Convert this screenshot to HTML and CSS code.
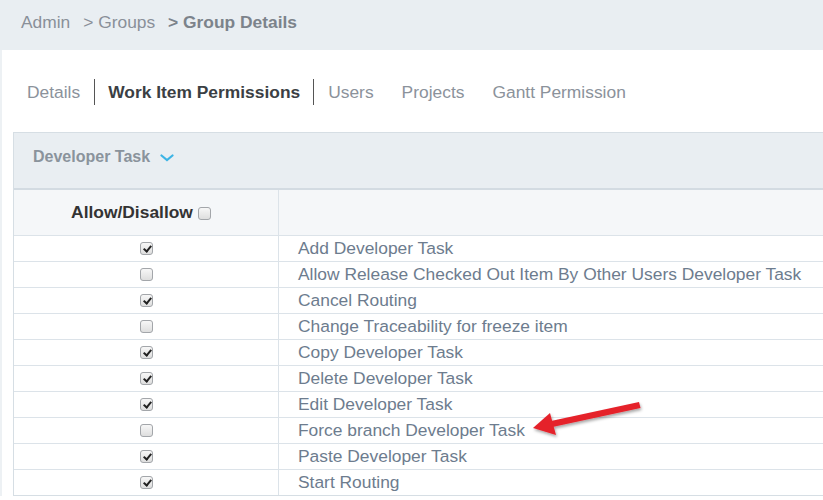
FILE: index.html
```html
<!DOCTYPE html>
<html lang="en">
<head>
    <meta charset="UTF-8">
    <title>Group Details</title>
    <link rel="stylesheet" href="styles.css">
</head>
<body>
<!--面包屑-->
<div class="crumbs">
    <span>Admin</span>
    <span class="sep">&gt;</span>
    <span>Groups</span>
    <b class="sep">&gt;</b>
    <b>Group Details</b>
</div>
<div class="page">
    <!--选项卡-->
    <ul class="tabs">
        <li class="first">Details</li>
        <li class="on">Work Item Permissions</li>
        <li>Users</li>
        <li>Projects</li>
        <li>Gantt Permission</li>
    </ul>
    <!--权限面板-->
    <div class="panel">
        <div class="panel-head">
            Developer Task
            <svg class="chev" width="14" height="8" viewBox="0 0 14 8"><path d="M1.5 1.5 L7 6 L12.5 1.5" fill="none" stroke="#3cb4e5" stroke-width="2.2" stroke-linecap="round"/></svg>
        </div>
        <table class="perm">
            <tr class="head">
                <th class="c1">Allow/Disallow<span class="cb"></span></th>
                <th></th>
            </tr>
            <tr><td class="c1"><span class="cb on"></span></td><td>Add Developer Task</td></tr>
            <tr><td class="c1"><span class="cb"></span></td><td>Allow Release Checked Out Item By Other Users Developer Task</td></tr>
            <tr><td class="c1"><span class="cb on"></span></td><td>Cancel Routing</td></tr>
            <tr><td class="c1"><span class="cb"></span></td><td>Change Traceability for freeze item</td></tr>
            <tr><td class="c1"><span class="cb on"></span></td><td>Copy Developer Task</td></tr>
            <tr><td class="c1"><span class="cb on"></span></td><td>Delete Developer Task</td></tr>
            <tr><td class="c1"><span class="cb on"></span></td><td>Edit Developer Task</td></tr>
            <tr><td class="c1"><span class="cb"></span></td><td>Force branch Developer Task</td></tr>
            <tr><td class="c1"><span class="cb on"></span></td><td>Paste Developer Task</td></tr>
            <tr><td class="c1"><span class="cb on"></span></td><td>Start Routing</td></tr>
        </table>
    </div>
</div>
<!--标注箭头-->
<svg class="arrow" width="823" height="500" viewBox="0 0 823 500">
    <defs>
        <filter id="sh" x="-20%" y="-20%" width="140%" height="140%">
            <feDropShadow dx="1" dy="2" stdDeviation="1.5" flood-color="#000" flood-opacity=".35"/>
        </filter>
    </defs>
    <g filter="url(#sh)" fill="#e5222b">
        <path d="M551 421 L639 402 L640.5 408 L552.5 427 Z"/>
        <path d="M533 428 L550 413 L556 435 Z"/>
    </g>
</svg>
</body>
</html>
```

FILE: styles.css
```css
*{margin:0;padding:0;font-family:"Liberation Sans",Arial,sans-serif;}
li{list-style:none;}
body{background:#fff;}
.crumbs{
    height:50px;
    line-height:44px;
    padding-left:21px;
    background:#e9eef2;
    font-size:17.4px;
    color:#8a9099;
    white-space:nowrap;
}
.crumbs .sep{margin:0 0 0 8px;}
.crumbs b{color:#7c838b;}
.page{
    border-left:2px solid #edf1f4;
    padding-left:11px;
}
.tabs{
    display:flex;
    align-items:center;
    height:82px;
    padding-left:14px;
    padding-top:2px;
    box-sizing:border-box;
}
.tabs li{
    height:26px;
    line-height:26px;
    padding:0 14px;
    font-size:17.4px;
    color:#8b929b;
    white-space:nowrap;
}
.tabs li.first{padding-left:0;}
.tabs li.on{
    padding:0 13px;
    border-left:1px solid #555;
    border-right:1px solid #555;
    font-weight:bold;
    color:#3b3f44;
}
.panel{
    border:1px solid #d6dee4;
    border-right:none;
}
.panel-head{
    display:flex;
    align-items:center;
    height:57px;
    padding-left:19px;
    padding-bottom:8px;
    box-sizing:border-box;
    background:#e9eef2;
    border-bottom:2px solid #d3dbe2;
    font-size:16px;
    font-weight:bold;
    color:#8a939c;
}
.chev{margin-left:10px;margin-top:3px;}
.perm{
    width:100%;
    border-collapse:collapse;
}
.perm th,.perm td{
    height:25px;
    border-top:1px solid #dce3e9;
    font-size:17.4px;
    font-weight:normal;
    color:#6d7c8e;
    text-align:left;
    padding:0 0 0 19px;
    white-space:nowrap;
}
.perm .c1{
    width:264px;
    padding:0;
    text-align:center;
    border-right:1px solid #dce3e9;
}
.perm tr.head th{
    height:45px;
    border-top:none;
    background:#f5f7f9;
    font-weight:bold;
    font-size:17.4px;
    color:#333;
}
.perm tr.head .c1 .cb{margin:0 10px 0 5px;vertical-align:-2px;}
.perm td .cb{vertical-align:middle;margin-top:-2px;}
.cb{
    display:inline-block;
    position:relative;
    width:11px;
    height:11px;
    border:1px solid #a3a6aa;
    border-radius:3px;
    background:linear-gradient(#f7f7f7,#dedede);
}
.cb.on:after{
    content:"";
    position:absolute;
    left:4px;
    top:1px;
    width:3px;
    height:6px;
    border-right:2px solid #222;
    border-bottom:2px solid #222;
    transform:rotate(40deg);
}
.arrow{
    position:absolute;
    left:0;
    top:0;
    pointer-events:none;
}
```
